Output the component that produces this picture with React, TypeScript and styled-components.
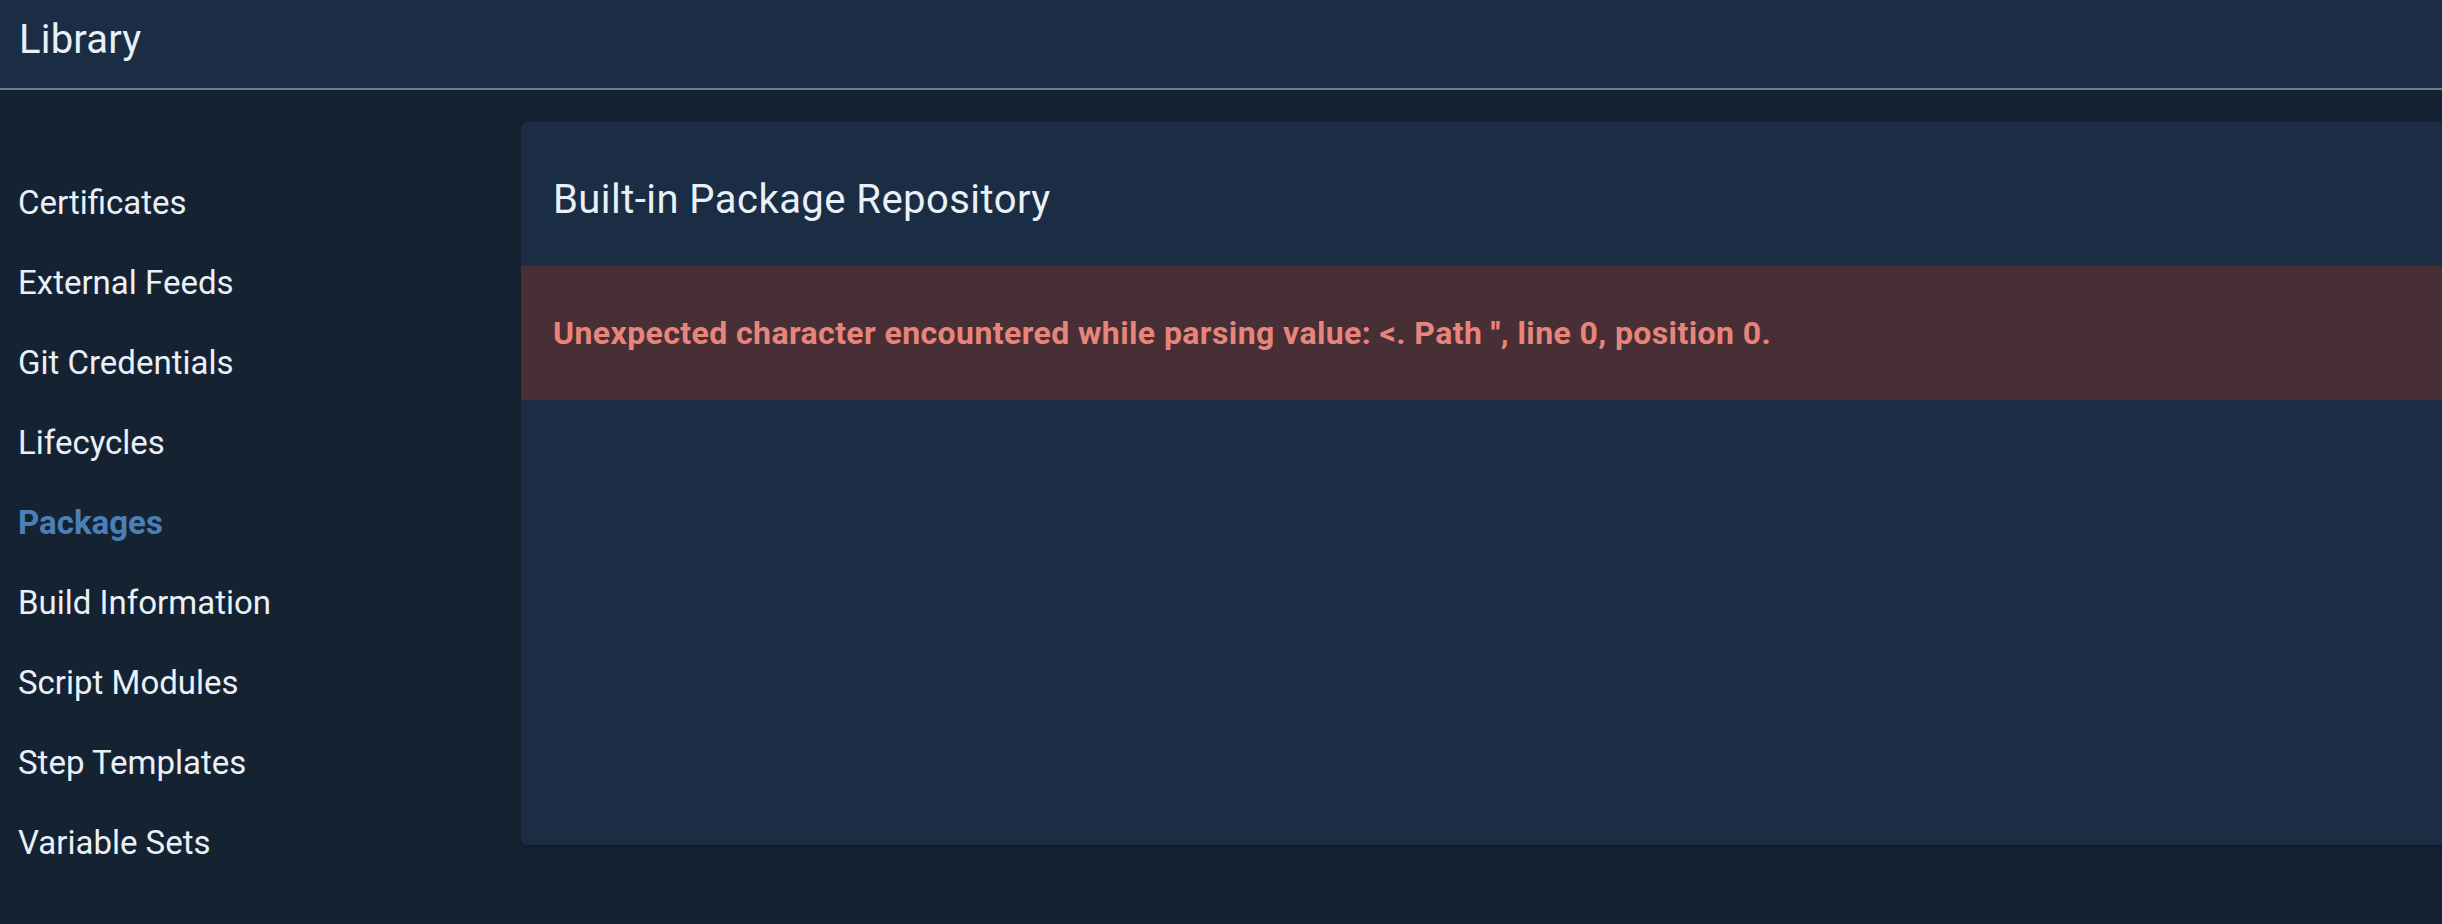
import React from "react";
import styled, { createGlobalStyle } from "styled-components";

const GlobalStyle = createGlobalStyle`
  html, body {
    margin: 0;
    padding: 0;
    background: #15222f;
    font-family: Roboto, "Noto Sans", "Liberation Sans", sans-serif;
    overflow: hidden;
  }
  * { box-sizing: border-box; }
`;

const Page = styled.div`
  width: 2442px;
  height: 924px;
  background: #152232;
  display: flex;
  flex-direction: column;
`;

const TopBar = styled.header`
  height: 90px;
  background: #1a2d44;
  border-bottom: 2px solid #6f7c8a;
  padding: 16px 19px 0;
`;

const TopTitle = styled.h1`
  margin: 0;
  font-size: 40px;
  line-height: 48px;
  font-weight: 400;
  letter-spacing: 0.2px;
  color: #e9f0f7;
`;

const Body = styled.div`
  flex: 1;
  display: flex;
  min-height: 0;
`;

const Sidebar = styled.nav`
  width: 521px;
  flex-shrink: 0;
  padding-top: 73px;
  display: flex;
  flex-direction: column;
`;

const NavItem = styled.a<{ $active?: boolean }>`
  display: block;
  padding-left: 18px;
  font-size: 33px;
  line-height: 80px;
  height: 80px;
  font-weight: ${(p) => (p.$active ? 700 : 400)};
  color: ${(p) => (p.$active ? "#4a80b8" : "#e9f0f7")};
  text-decoration: none;
  white-space: nowrap;
`;

const Main = styled.main`
  flex: 1;
  padding-top: 32px;
  min-width: 0;
`;

const Card = styled.section`
  height: 723px;
  width: calc(100% + 40px);
  background: #1a2d44;
  border-radius: 6px 0 0 6px;
  box-shadow: 0 2px 4px rgba(0, 0, 0, 0.2);
  overflow: hidden;
`;

const CardHeader = styled.div`
  height: 144px;
  padding: 54px 32px 0;
`;

const CardTitle = styled.h2`
  margin: 0;
  font-size: 40px;
  line-height: 48px;
  font-weight: 400;
  letter-spacing: 0.45px;
  color: #e9f0f7;
`;

const ErrorBanner = styled.div`
  height: 134px;
  background: #482f36;
  padding: 50px 32px 0;
`;

const ErrorText = styled.p`
  margin: 0;
  font-size: 32px;
  line-height: 34px;
  font-weight: 700;
  letter-spacing: 0.4px;
  color: #e8857b;
  white-space: nowrap;
`;

const navItems = [
  "Certificates",
  "External Feeds",
  "Git Credentials",
  "Lifecycles",
  "Packages",
  "Build Information",
  "Script Modules",
  "Step Templates",
  "Variable Sets",
];

export default function App() {
  return (
    <>
      <GlobalStyle />
      <Page>
        <TopBar>
          <TopTitle>Library</TopTitle>
        </TopBar>
        <Body>
          <Sidebar>
            {navItems.map((item) => (
              <NavItem key={item} $active={item === "Packages"}>
                {item}
              </NavItem>
            ))}
          </Sidebar>
          <Main>
            <Card>
              <CardHeader>
                <CardTitle>Built-in Package Repository</CardTitle>
              </CardHeader>
              <ErrorBanner>
                <ErrorText>
                  Unexpected character encountered while parsing value: &lt;. Path '', line 0, position 0.
                </ErrorText>
              </ErrorBanner>
            </Card>
          </Main>
        </Body>
      </Page>
    </>
  );
}
